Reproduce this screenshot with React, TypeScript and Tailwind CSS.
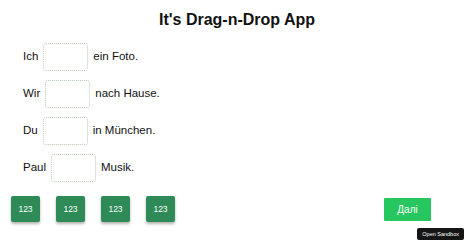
const sentences = [
  { before: "Ich", after: "ein Foto." },
  { before: "Wir", after: "nach Hause." },
  { before: "Du", after: "in München." },
  { before: "Paul", after: "Musik." },
];

export default function App() {
  return (
    <div className="relative h-[248px] w-[474px] overflow-hidden bg-white font-['Liberation_Sans',Arial,sans-serif] text-[#111]">
      <h1 className="pt-[10px] text-center text-[16px] font-bold leading-[20px]">It's Drag-n-Drop App</h1>
      <div className="mt-[13px] flex flex-col gap-[9px] pl-[23px]">
        {sentences.map((s) => (
          <div key={s.before} className="flex h-[28px] items-center gap-[5px] text-[11.5px]">
            <span>{s.before}</span>
            <div className="h-[28px] w-[45px] rounded-[3px] border border-dotted border-[#b9c9b9]" />
            <span>{s.after}</span>
          </div>
        ))}
      </div>
      <div className="mt-[14px] flex items-center pl-[11px] pr-[43px]">
        <div className="flex gap-[16px]">
          {[0, 1, 2, 3].map((i) => (
            <div
              key={i}
              className="flex h-[26px] w-[29px] items-center justify-center rounded-[2px] bg-[#2e8b57] text-[8.5px] text-white shadow-[0_2px_3px_rgba(0,0,0,0.3)]"
            >
              123
            </div>
          ))}
        </div>
        <button className="ml-auto flex h-[23px] w-[47px] items-center justify-center rounded-[1px] bg-[#27c760] text-[10px] text-white">
          Далі
        </button>
      </div>
      <div className="absolute right-[10px] bottom-[8px] flex h-[12px] items-center rounded-[2px] bg-[#151515] px-[5px] text-[5.5px] text-white">
        Open Sandbox
      </div>
    </div>
  );
}
